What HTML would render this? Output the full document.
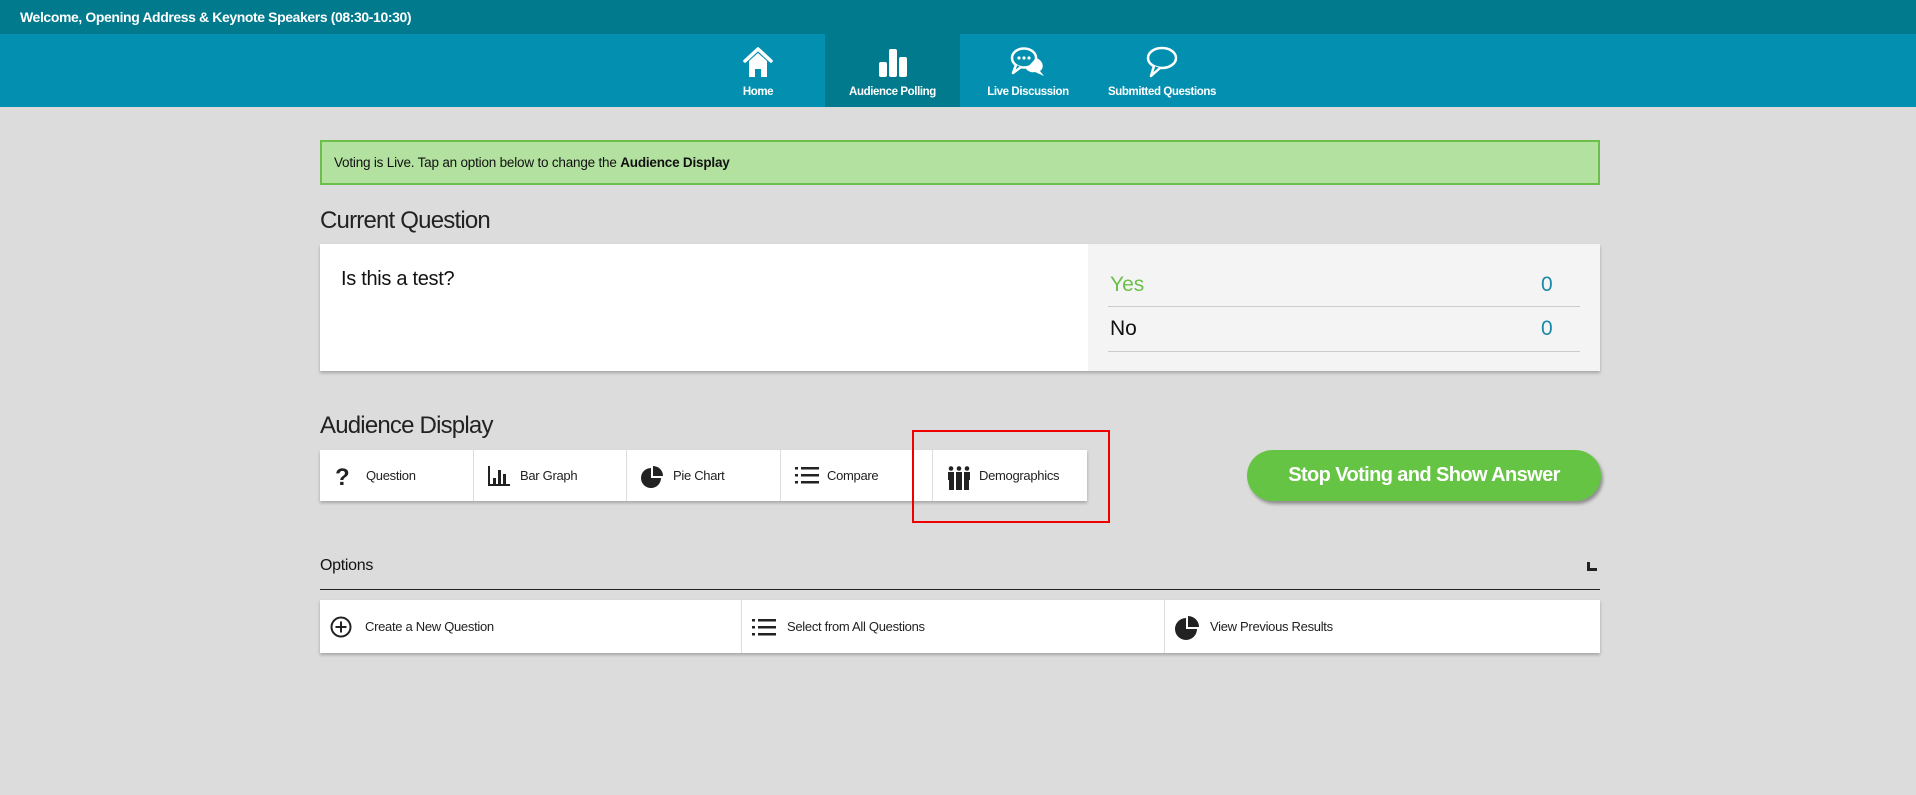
<!DOCTYPE html>
<html><head><meta charset="utf-8"><style>
*{box-sizing:border-box;margin:0;padding:0}
body{width:1916px;height:795px;background:#dcdcdc;font-family:"Liberation Sans",sans-serif;position:relative;overflow:hidden;color:#111}
.abs{position:absolute}
.top{left:0;top:0;width:1916px;height:34px;background:#007a8c;color:#fff;font-size:14px;font-weight:bold;line-height:34px;padding-left:20px;letter-spacing:-0.4px}
.nav{left:0;top:34px;width:1916px;height:73px;background:#0390b0}
.tab{top:0;height:73px;color:#fff;font-size:11.5px;font-weight:bold;text-align:center}
.tab span{position:absolute;left:0;right:0;top:52px;white-space:nowrap;letter-spacing:-0.4px}
.tab svg{position:absolute;left:50%;top:12px;transform:translateX(-50%)}
.banner{left:320px;top:140px;width:1280px;height:45px;background:#b3e2a0;border:2px solid #6cc04a;font-size:13.5px;line-height:41px;padding-left:12px;letter-spacing:-0.2px}
h2{position:absolute;font-weight:normal;font-size:24px;color:#222;letter-spacing:-0.8px}
.card{left:320px;top:244px;width:1280px;height:127px;background:#fff;box-shadow:0 2px 3px rgba(0,0,0,.25)}
.panel{left:768px;top:0;width:512px;height:127px;background:#f4f4f4}
.row{position:absolute;left:20px;width:472px;height:1px;background:#ccc}
.lbl{position:absolute;font-size:21px}
.btns{left:320px;top:450px;width:767px;height:51px;background:#fff;box-shadow:0 2px 3px rgba(0,0,0,.25)}
.b{position:absolute;top:0;height:51px;border-right:1px solid #ddd;font-size:13px;line-height:51px;color:#222;letter-spacing:-0.3px}
.b svg{position:absolute;left:14px;top:16px}
.b span{position:absolute;left:46px}
.stop{left:1247px;top:450px;width:354px;height:51px;background:#66c444;border-radius:26px;color:#fff;font-weight:bold;font-size:20px;text-align:center;line-height:51px;box-shadow:2px 3px 3px rgba(0,0,0,.35);letter-spacing:-0.6px}
.opts{left:320px;top:600px;width:1280px;height:53px;background:#fff;box-shadow:0 2px 3px rgba(0,0,0,.25)}
.o{position:absolute;top:0;height:53px;border-right:1px solid #ddd;font-size:13px;line-height:53px;color:#222;letter-spacing:-0.3px}
.o svg{position:absolute;left:10px;top:16px}
.o span{position:absolute;left:45px}
</style></head><body>
<div class="abs top">Welcome, Opening Address &amp; Keynote Speakers (08:30-10:30)</div>
<div class="abs nav">
 <div class="abs tab" style="left:712px;width:92px"><svg width="32" height="32" viewBox="0 0 32 32"><path d="M3 15 L16 3 L29 15" fill="none" stroke="#fff" stroke-width="3.5" stroke-linejoin="round" stroke-linecap="round"/><path d="M7 15 L16 7 L25 15 V31 H19 V23 H13 V31 H7Z" fill="#fff"/></svg><span>Home</span></div>
 <div class="abs tab" style="left:825px;width:135px;background:#007a8c"><svg width="32" height="32" viewBox="0 0 32 32"><rect x="2" y="16" width="8" height="15" rx="2" fill="#fff"/><rect x="12" y="3" width="8" height="28" rx="2" fill="#fff"/><rect x="22" y="11" width="8" height="20" rx="2" fill="#fff"/></svg><span>Audience Polling</span></div>
 <div class="abs tab" style="left:975px;width:106px"><svg width="38" height="32" viewBox="0 0 38 32"><ellipse cx="15" cy="12" rx="12" ry="9.5" fill="#0390b0" stroke="#fff" stroke-width="2.5"/><path d="M7 19 L4 27 L12 21" fill="#0390b0" stroke="#fff" stroke-width="2.5" stroke-linejoin="round"/><path d="M27 12 C34 14 36 22 31 25 L35 30 L26 26 C22 27 19 25 17 23" fill="#fff"/><circle cx="10" cy="12" r="1.6" fill="#fff"/><circle cx="15" cy="12" r="1.6" fill="#fff"/><circle cx="20" cy="12" r="1.6" fill="#fff"/></svg><span>Live Discussion</span></div>
 <div class="abs tab" style="left:1100px;width:124px"><svg width="34" height="32" viewBox="0 0 34 32"><ellipse cx="17" cy="12" rx="14" ry="10" fill="none" stroke="#fff" stroke-width="2.5"/><path d="M9 20 L6 30 L15 22" fill="#0390b0" stroke="#fff" stroke-width="2.5" stroke-linejoin="round"/></svg><span>Submitted Questions</span></div>
</div>
<div class="abs banner">Voting is Live. Tap an option below to change the <b>Audience Display</b></div>
<h2 style="left:320px;top:207px">Current Question</h2>
<div class="abs card">
 <div class="lbl" style="left:21px;top:24px;font-size:20px;letter-spacing:-0.3px">Is this a test?</div>
 <div class="abs panel">
  <div class="lbl" style="left:22px;top:29px;color:#6cc04a">Yes</div>
  <div class="lbl" style="left:453px;top:29px;color:#1a8aa8">0</div>
  <div class="row" style="top:62px"></div>
  <div class="lbl" style="left:22px;top:73px">No</div>
  <div class="lbl" style="left:453px;top:73px;color:#1a8aa8">0</div>
  <div class="row" style="top:107px"></div>
 </div>
</div>
<h2 style="left:320px;top:412px">Audience Display</h2>
<div class="abs btns">
 <div class="b" style="left:0;width:154px"><svg width="16" height="22" viewBox="0 0 16 22"><text x="1" y="19" font-family="Liberation Sans" font-weight="bold" font-size="24" fill="#222">?</text></svg><span>Question</span></div>
 <div class="b" style="left:154px;width:153px"><svg width="22" height="20" viewBox="0 0 22 20"><path d="M1 0V19H22" fill="none" stroke="#222" stroke-width="2"/><rect x="5" y="12" width="3" height="6" fill="#222"/><rect x="10" y="4" width="3" height="14" fill="#222"/><rect x="15" y="8" width="3" height="10" fill="#222"/></svg><span>Bar Graph</span></div>
 <div class="b" style="left:307px;width:154px"><svg width="22" height="22" viewBox="0 0 22 22"><path d="M10 2 A10 10 0 1 0 20 12 H10Z" fill="#222"/><path d="M12 0 A10 10 0 0 1 22 10 H12Z" fill="#222"/></svg><span>Pie Chart</span></div>
 <div class="b" style="left:461px;width:152px"><svg width="24" height="18" viewBox="0 0 24 18"><rect x="0" y="1" width="3" height="2.5" fill="#222"/><rect x="6" y="1" width="18" height="2.5" fill="#222"/><rect x="0" y="8" width="3" height="2.5" fill="#222"/><rect x="6" y="8" width="18" height="2.5" fill="#222"/><rect x="0" y="15" width="3" height="2.5" fill="#222"/><rect x="6" y="15" width="18" height="2.5" fill="#222"/></svg><span>Compare</span></div>
 <div class="b" style="left:613px;width:154px;border:none"><svg width="24" height="24" viewBox="0 0 24 24"><circle cx="4" cy="2.5" r="2.3" fill="#222"/><circle cx="12" cy="2.5" r="2.3" fill="#222"/><circle cx="20" cy="2.5" r="2.3" fill="#222"/><path d="M1 6H7V24H2V14H1Z M9 6H15V24H9Z M17 6H23V14H22V24H17Z" fill="#222"/></svg><span>Demographics</span></div>
</div>
<div class="abs" style="left:912px;top:430px;width:198px;height:93px;border:2px solid #e00"></div>
<div class="abs stop">Stop Voting and Show Answer</div>
<div class="abs" style="left:320px;top:557px;font-size:16px;letter-spacing:-0.3px">Options</div>
<div class="abs" style="left:1587px;top:562px;width:10px;height:9px;border-left:3px solid #222;border-bottom:3px solid #222"></div>
<div class="abs" style="left:320px;top:589px;width:1280px;height:1px;background:#222"></div>
<div class="abs opts">
 <div class="o" style="left:0;width:422px"><svg width="22" height="22" viewBox="0 0 22 22"><circle cx="11" cy="11" r="9.5" fill="none" stroke="#222" stroke-width="2"/><path d="M11 5.5V16.5M5.5 11H16.5" stroke="#222" stroke-width="2"/></svg><span>Create a New Question</span></div>
 <div class="o" style="left:422px;width:423px"><svg width="26" height="22" viewBox="0 0 26 22"><rect x="0" y="3" width="3" height="2.5" fill="#222"/><rect x="6" y="3" width="18" height="2.5" fill="#222"/><rect x="0" y="10" width="3" height="2.5" fill="#222"/><rect x="6" y="10" width="18" height="2.5" fill="#222"/><rect x="0" y="17" width="3" height="2.5" fill="#222"/><rect x="6" y="17" width="18" height="2.5" fill="#222"/></svg><span>Select from All Questions</span></div>
 <div class="o" style="left:845px;width:435px;border:none"><svg width="24" height="24" viewBox="0 0 24 24"><path d="M11 2 A11 11 0 1 0 22 13 H11Z" fill="#222"/><path d="M13 0 A11 11 0 0 1 24 11 H13Z" fill="#222"/></svg><span>View Previous Results</span></div>
</div>
</body></html>
